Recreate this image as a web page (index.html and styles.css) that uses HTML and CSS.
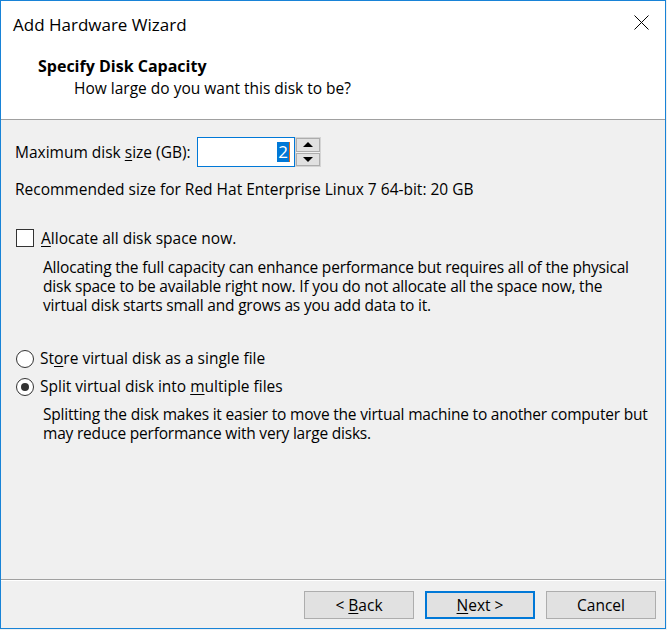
FILE: index.html
```html
<!DOCTYPE html>
<html lang="en">
<head>
    <meta charset="UTF-8">
    <title>Add Hardware Wizard</title>
    <link rel="stylesheet" href="styles.css">
</head>
<body>
    <div class="window">
        <div class="titlebar">
            <span class="title">Add Hardware Wizard</span>
            <svg class="close" width="15" height="15" viewBox="0 0 15 15">
                <path d="M0.5 0.5 L14.5 14.5 M14.5 0.5 L0.5 14.5" stroke="#000" stroke-width="1" fill="none"/>
            </svg>
        </div>

        <div class="header">
            <div class="header-title">Specify Disk Capacity</div>
            <div class="header-sub">How large do you want this disk to be?</div>
        </div>

        <div class="content">
            <div class="size-row">
                <label class="size-label">Maximum disk <u>s</u>ize (GB):</label>
                <div class="spin-input">
                    <div class="spin-field"><span class="sel">2</span><span class="caret"></span></div>
                    <div class="spin-btns">
                        <div class="spin-btn"><span class="arrow-up"></span></div>
                        <div class="spin-btn"><span class="arrow-down"></span></div>
                    </div>
                </div>
            </div>

            <div class="recommend">Recommended size for Red Hat Enterprise Linux 7 64-bit: 20 GB</div>

            <div class="check-row">
                <span class="checkbox"></span>
                <span class="check-label"><u>A</u>llocate all disk space now.</span>
            </div>
            <div class="desc desc-alloc">Allocating the full capacity can enhance performance but requires all of the physical disk space to be available right now. If you do not allocate all the space now, the virtual disk starts small and grows as you add data to it.</div>

            <div class="radio-row radio-first">
                <span class="radio"></span>
                <span class="radio-label">St<u>o</u>re virtual disk as a single file</span>
            </div>
            <div class="radio-row radio-second">
                <span class="radio checked"></span>
                <span class="radio-label">Split virtual disk into <u>m</u>ultiple files</span>
            </div>
            <div class="desc desc-split">Splitting the disk makes it easier to move the virtual machine to another computer but may reduce performance with very large disks.</div>
        </div>

        <div class="footer">
            <button class="btn">&lt; <u>B</u>ack</button>
            <button class="btn btn-default"><u>N</u>ext &gt;</button>
            <button class="btn">Cancel</button>
        </div>
    </div>
</body>
</html>
```

FILE: styles.css
```css
body {
    margin: 0;
    background-color: #f0f0f0;
    font-family: "Open Sans", "Noto Sans", sans-serif;
    font-size: 15.5px;
    color: #000;
}
u {
    text-decoration-thickness: 1px;
    text-underline-offset: 2px;
}
.window {
    width: 666px;
    height: 629px;
    box-sizing: border-box;
    border: 1px solid #1883d7;
    background-color: #f0f0f0;
    display: flex;
    flex-direction: column;
}
.titlebar {
    height: 46px;
    flex-shrink: 0;
    background-color: #fff;
    display: flex;
    align-items: center;
    justify-content: space-between;
    padding: 0 16px 0 12px;
}
.title {
    font-size: 17px;
}
.close {
    display: block;
    margin-top: -4px;
}
.header {
    height: 63px;
    flex-shrink: 0;
    background-color: #fff;
    border-bottom: 1px solid #a0a0a0;
    padding: 9px 0 0 37px;
    line-height: 20px;
}
.header-title {
    font-weight: bold;
    font-size: 16px;
}
.header-sub {
    margin-top: 2px;
    padding-left: 36px;
}
.content {
    flex-grow: 1;
    padding: 17px 6px 0 14px;
    line-height: 19px;
}
.size-row {
    display: flex;
    align-items: center;
    height: 30px;
}
.size-label {
    width: 182px;
    flex-shrink: 0;
}
.spin-input {
    display: flex;
    height: 30px;
}
.spin-field {
    width: 92px;
    height: 28px;
    border: 1px solid #0078d7;
    background-color: #fff;
    display: flex;
    align-items: center;
    justify-content: flex-end;
    padding-right: 4px;
}
.sel {
    background-color: #0078d7;
    color: #fff;
    font-size: 17px;
    line-height: 20px;
    padding: 0 1px;
}
.caret {
    width: 1px;
    height: 20px;
    background-color: #e06a1a;
}
.spin-btns {
    width: 24px;
    height: 28px;
    border: 1px solid #d4d4d4;
    background-color: #f0f0f0;
    display: flex;
    flex-direction: column;
    gap: 1px;
}
.spin-btn {
    flex: 1;
    background-color: #e1e1e1;
    border: 1px solid #adadad;
    display: flex;
    align-items: center;
    justify-content: center;
}
.arrow-up {
    width: 0;
    height: 0;
    border-left: 5px solid transparent;
    border-right: 5px solid transparent;
    border-bottom: 5px solid #000;
}
.arrow-down {
    width: 0;
    height: 0;
    border-left: 5px solid transparent;
    border-right: 5px solid transparent;
    border-top: 5px solid #000;
}
.recommend {
    margin-top: 13px;
}
.check-row {
    display: flex;
    align-items: center;
    height: 18px;
    margin-top: 30px;
}
.checkbox {
    width: 16px;
    height: 16px;
    border: 1px solid #333;
    background-color: #fff;
    margin-left: 1px;
    margin-right: 7px;
}
.desc {
    padding-left: 28px;
    letter-spacing: -0.2px;
}
.desc-alloc {
    margin-top: 11px;
    padding-right: 14px;
}
.radio-row {
    display: flex;
    align-items: center;
    height: 19px;
}
.radio-first {
    margin-top: 34px;
}
.radio-second {
    margin-top: 9px;
}
.radio {
    width: 16px;
    height: 16px;
    border: 1px solid #333;
    border-radius: 50%;
    background-color: #fff;
    margin-left: 1px;
    margin-right: 6px;
    display: flex;
    align-items: center;
    justify-content: center;
}
.radio.checked::after {
    content: "";
    width: 8px;
    height: 8px;
    border-radius: 50%;
    background-color: #333;
}
.desc-split {
    margin-top: 9px;
}
.footer {
    height: 49px;
    flex-shrink: 0;
    border-top: 1px solid #a0a0a0;
    box-shadow: inset 0 1px 0 #fff;
    display: flex;
    justify-content: flex-end;
    padding: 11px 9px 0 0;
    gap: 11px;
    box-sizing: border-box;
}
.btn {
    width: 110px;
    height: 28px;
    font-family: inherit;
    font-size: 15.5px;
    color: #000;
    background-color: #e1e1e1;
    border: 1px solid #adadad;
    padding: 0;
    margin: 0;
}
.btn-default {
    border: 2px solid #0078d7;
}
```
